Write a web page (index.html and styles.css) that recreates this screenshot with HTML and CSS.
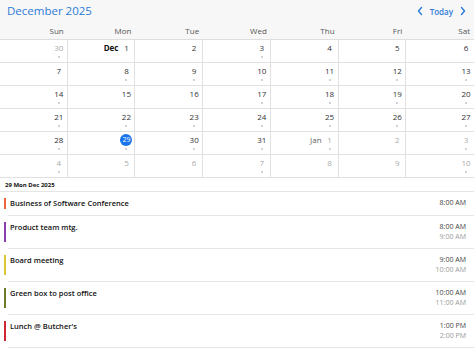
FILE: index.html
```html
<!DOCTYPE html>
<html>
<head>
<meta charset="utf-8">
<link rel="stylesheet" href="styles.css">
</head>
<body>
<div class="app">
  <header class="cal-head">
    <div class="title-row">
      <h1 class="month-title">December 2025</h1>
      <nav class="nav">
        <svg class="chev" viewBox="0 0 8 10" width="8" height="10"><path d="M5.5 1.5 L2.5 5 L5.5 8.5" fill="none" stroke="currentColor" stroke-width="1.4" stroke-linecap="round" stroke-linejoin="round"/></svg>
        <span class="today">Today</span>
        <svg class="chev" viewBox="0 0 8 10" width="8" height="10"><path d="M2.5 1.5 L5.5 5 L2.5 8.5" fill="none" stroke="currentColor" stroke-width="1.4" stroke-linecap="round" stroke-linejoin="round"/></svg>
      </nav>
    </div>
    <div class="dow-row">
      <span>Sun</span><span>Mon</span><span>Tue</span><span>Wed</span><span>Thu</span><span>Fri</span><span>Sat</span>
    </div>
  </header>

  <div class="grid" id="grid"></div>

  <div class="day-label">29 Mon Dec 2025</div>

  <ul class="events">
    <li class="event">
      <span class="bar c-orange"></span>
      <span class="ev-title">Business of Software Conference</span>
      <span class="ev-times"><span class="t-start">8:00 AM</span></span>
    </li>
    <li class="event">
      <span class="bar c-purple"></span>
      <span class="ev-title">Product team mtg.</span>
      <span class="ev-times"><span class="t-start">8:00 AM</span><span class="t-end">9:00 AM</span></span>
    </li>
    <li class="event">
      <span class="bar c-yellow"></span>
      <span class="ev-title">Board meeting</span>
      <span class="ev-times"><span class="t-start">9:00 AM</span><span class="t-end">10:00 AM</span></span>
    </li>
    <li class="event">
      <span class="bar c-olive"></span>
      <span class="ev-title">Green box to post office</span>
      <span class="ev-times"><span class="t-start">10:00 AM</span><span class="t-end">11:00 AM</span></span>
    </li>
    <li class="event">
      <span class="bar c-red"></span>
      <span class="ev-title">Lunch @ Butcher's</span>
      <span class="ev-times"><span class="t-start">1:00 PM</span><span class="t-end">2:00 PM</span></span>
    </li>
  </ul>
</div>
<script>
  var days = [
    [30,'o',1],[1,'c',0,'Dec'],[2,'c',0],[3,'c',1],[4,'c',0],[5,'c',0],[6,'c',0],
    [7,'c',0],[8,'c',1],[9,'c',1],[10,'c',1],[11,'c',1],[12,'c',1],[13,'c',1],
    [14,'c',1],[15,'c',0],[16,'c',0],[17,'c',1],[18,'c',1],[19,'c',1],[20,'c',1],
    [21,'c',1],[22,'c',1],[23,'c',1],[24,'c',1],[25,'c',1],[26,'c',1],[27,'c',1],
    [28,'c',1],[29,'s',1],[30,'c',1],[31,'c',1],[1,'o',1,'Jan'],[2,'o',0],[3,'o',1],
    [4,'o',1],[5,'o',0],[6,'o',0],[7,'o',1],[8,'o',0],[9,'o',0],[10,'o',1]
  ];
  var g = document.getElementById('grid');
  days.forEach(function(d){
    var cell = document.createElement('div');
    cell.className = 'cell' + (d[1]==='o' ? ' other' : '') + (d[1]==='s' ? ' selected' : '');
    var html = '';
    if (d[3]) html += '<span class="mlabel' + (d[1]==='c' ? ' cur' : '') + '">' + d[3] + '</span>';
    html += '<span class="dnum"><span class="n">' + d[0] + '</span>' + (d[2] ? '<span class="dot"></span>' : '') + '</span>';
    cell.innerHTML = html;
    g.appendChild(cell);
  });
</script>
</body>
</html>
```

FILE: styles.css
```css
* { box-sizing: border-box; margin: 0; padding: 0; }
html, body { width: 474px; height: 355px; overflow: hidden; background: #fff; }
body { font-family: "Open Sans", "Noto Sans", sans-serif; color: #222; }

.cal-head { background: #f7f7f7; border-bottom: 1px solid #dedede; }
.title-row { height: 22px; display: flex; align-items: center; justify-content: space-between; padding: 0 7px 0 7px; }
.month-title { font-size: 11.5px; font-weight: 400; color: #2d7bd8; line-height: 22px; }
.nav { display: flex; align-items: center; gap: 2px; color: #2d7bd8; }
.today { font-size: 8px; font-weight: 600; padding: 0 4px; }
.chev { display: block; }

.dow-row { height: 17px; display: grid; grid-template-columns: repeat(7, 1fr); align-items: center; }
.dow-row span { text-align: right; padding-right: 4px; font-size: 8px; color: #555; line-height: 12px; }

.grid { display: grid; grid-template-columns: repeat(7, 1fr); grid-auto-rows: 23px; }
.cell { border-right: 1px solid #e0e0e0; border-bottom: 1px solid #e0e0e0; display: flex; justify-content: flex-end; align-items: flex-start; padding: 2px 1px 0 0; }
.cell:nth-child(7n) { border-right: none; }
.mlabel { font-size: 8px; line-height: 12px; color: #666; margin-right: 1px; }
.mlabel.cur { font-weight: 700; color: #111; }
.dnum { width: 14px; display: flex; flex-direction: column; align-items: center; }
.n { font-size: 8px; line-height: 12px; color: #333; display: block; width: 12px; height: 12px; text-align: center; border-radius: 50%; }
.other .n { color: #aaa; }
.selected .n { background: #1a73e8; color: #fff; font-size: 7px; }
.dot { width: 2px; height: 2px; border-radius: 50%; background: #c4c4c4; margin-top: 2px; }

.day-label { height: 14px; font-size: 6px; font-weight: 700; color: #111; padding: 2px 0 0 5px; line-height: 10px; border-bottom: 1px solid #e4e4e4; }

.events { list-style: none; }
.event { display: flex; align-items: flex-start; padding: 6px 8px 6px 4px; position: relative; min-height: 24px; }
.event::after { content: ""; position: absolute; left: 8px; right: 0; bottom: 0; height: 1px; background: #e6e6e6; }
.event:not(:first-child) { min-height: 33px; }
.bar { width: 2px; margin-right: 4px; flex: none; }
.event:first-child .bar { height: 11px; }
.event:not(:first-child) .bar { height: 20px; }
.c-orange { background: #f0643c; }
.c-purple { background: #8b3fae; }
.c-yellow { background: #d9c630; }
.c-olive { background: #6d7a2c; }
.c-red { background: #d02432; }
.ev-title { flex: 1; font-size: 7.5px; font-weight: 600; color: #111; line-height: 10px; }
.ev-times { display: flex; flex-direction: column; align-items: flex-end; }
.t-start, .t-end { font-size: 7px; line-height: 10px; color: #444; }
.t-end { color: #999; }
```
